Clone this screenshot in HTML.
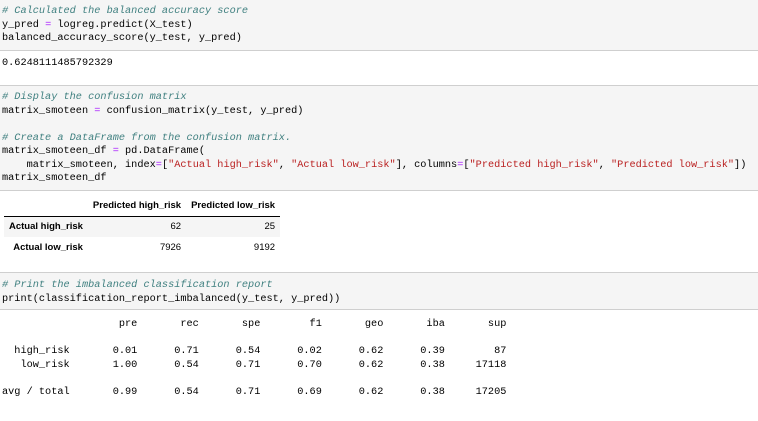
<!DOCTYPE html>
<html><head><style>
*{margin:0;padding:0;box-sizing:border-box}
body{width:758px;height:421px;background:#fff;overflow:hidden;position:relative;font-family:"Liberation Mono",monospace;font-size:10.25px;color:#000}
.cell{position:absolute;left:0;width:758px;background:#f5f5f5;border-top:1px solid #cfcfcf;border-bottom:1px solid #cfcfcf}
pre{font-family:"Liberation Mono",monospace;font-size:10.25px;line-height:13.5px;position:absolute;left:2px;white-space:pre}
.c{color:#408080;font-style:italic}.o{color:#aa22ff}.s{color:#ba2121}
table{position:absolute;left:4px;top:196px;border-collapse:collapse;font-family:"Liberation Sans",Arial,sans-serif;font-size:9.5px}
th,td{height:21px;padding:0 5px;text-align:right}
thead th{border-bottom:1px solid #000;height:20px}
tbody tr:nth-child(1){background:#f5f5f5}
</style></head><body>
<div class="cell" style="top:-2px;height:53px"></div>
<pre style="top:5px"><span class="c"># Calculated the balanced accuracy score</span>
y_pred <span class="o">=</span> logreg.predict(X_test)
balanced_accuracy_score(y_test, y_pred)</pre>
<pre style="top:57px">0.6248111485792329</pre>
<div class="cell" style="top:85px;height:106px"></div>
<pre style="top:91px"><span class="c"># Display the confusion matrix</span>
matrix_smoteen <span class="o">=</span> confusion_matrix(y_test, y_pred)

<span class="c"># Create a DataFrame from the confusion matrix.</span>
matrix_smoteen_df <span class="o">=</span> pd.DataFrame(
    matrix_smoteen, index<span class="o">=</span>[<span class="s">"Actual high_risk"</span>, <span class="s">"Actual low_risk"</span>], columns<span class="o">=</span>[<span class="s">"Predicted high_risk"</span>, <span class="s">"Predicted low_risk"</span>])
matrix_smoteen_df</pre>
<table>
<thead><tr><th></th><th>Predicted high_risk</th><th>Predicted low_risk</th></tr></thead>
<tbody><tr><th>Actual high_risk</th><td>62</td><td>25</td></tr>
<tr><th>Actual low_risk</th><td>7926</td><td>9192</td></tr></tbody>
</table>
<div class="cell" style="top:272px;height:38px"></div>
<pre style="top:279px"><span class="c"># Print the imbalanced classification report</span>
print(classification_report_imbalanced(y_test, y_pred))</pre>
<pre style="top:318px">                   pre       rec       spe        f1       geo       iba       sup

  high_risk       0.01      0.71      0.54      0.02      0.62      0.39        87
   low_risk       1.00      0.54      0.71      0.70      0.62      0.38     17118

avg / total       0.99      0.54      0.71      0.69      0.62      0.38     17205</pre>
</body></html>
